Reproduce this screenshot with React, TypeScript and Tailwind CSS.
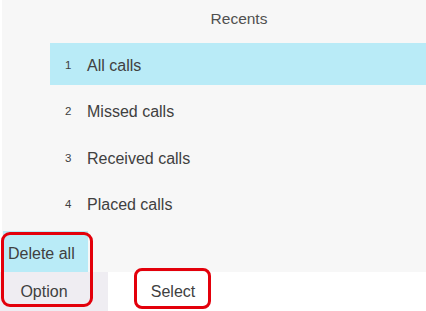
import React from "react";

const items = [
  { n: "1", label: "All calls" },
  { n: "2", label: "Missed calls" },
  { n: "3", label: "Received calls" },
  { n: "4", label: "Placed calls" },
];

export default function App() {
  const selected = 0;

  return (
    <div
      className="relative w-[426px] h-[311px] bg-white overflow-hidden text-[#404040]"
      style={{ fontFamily: '"Liberation Sans", Arial, sans-serif' }}
    >
      {/* pantalla principal */}
      <div className="ml-[2px] h-[272px] bg-[#f7f7f7] flex flex-col">
        <div className="h-[43px] pl-[50px] pb-[6px] flex items-center justify-center text-[15.5px] text-[#505050]">
          Recents
        </div>
        <ul className="pl-[48px] flex flex-col gap-[4.5px]">
          {items.map((it, i) => (
            <li
              key={it.n}
              className={
                "h-[42px] flex items-center pt-[3px] " + (i === selected ? "bg-[#b9ebf7]" : "")
              }
            >
              <span className="w-[37px] pl-[15px] text-[11.5px]">{it.n}</span>
              <span className="text-[16px]">{it.label}</span>
            </li>
          ))}
        </ul>
      </div>

      {/* softkeys */}
      <div className="h-[39px] flex">
        <div className="w-[108px] bg-[#efedf2] flex items-center justify-center pr-[20px] text-[16px]">
          Option
        </div>
        <div className="w-[130px] flex items-center justify-center text-[16px]">Select</div>
      </div>

      {/* menu desplegado */}
      <div className="absolute left-[3px] top-[231px] w-[85px] h-[41px] bg-[#b9ebf7] flex items-center pl-[5px] pt-[4px] text-[16px]">
        Delete all
      </div>

      {/* marcas rojas */}
      <div className="absolute left-[1px] top-[232px] w-[92px] h-[75px] border-[3px] border-[#e3000b] rounded-[9px]" />
      <div className="absolute left-[134px] top-[268px] w-[77px] h-[41px] border-[3px] border-[#e3000b] rounded-[8px]" />
    </div>
  );
}
